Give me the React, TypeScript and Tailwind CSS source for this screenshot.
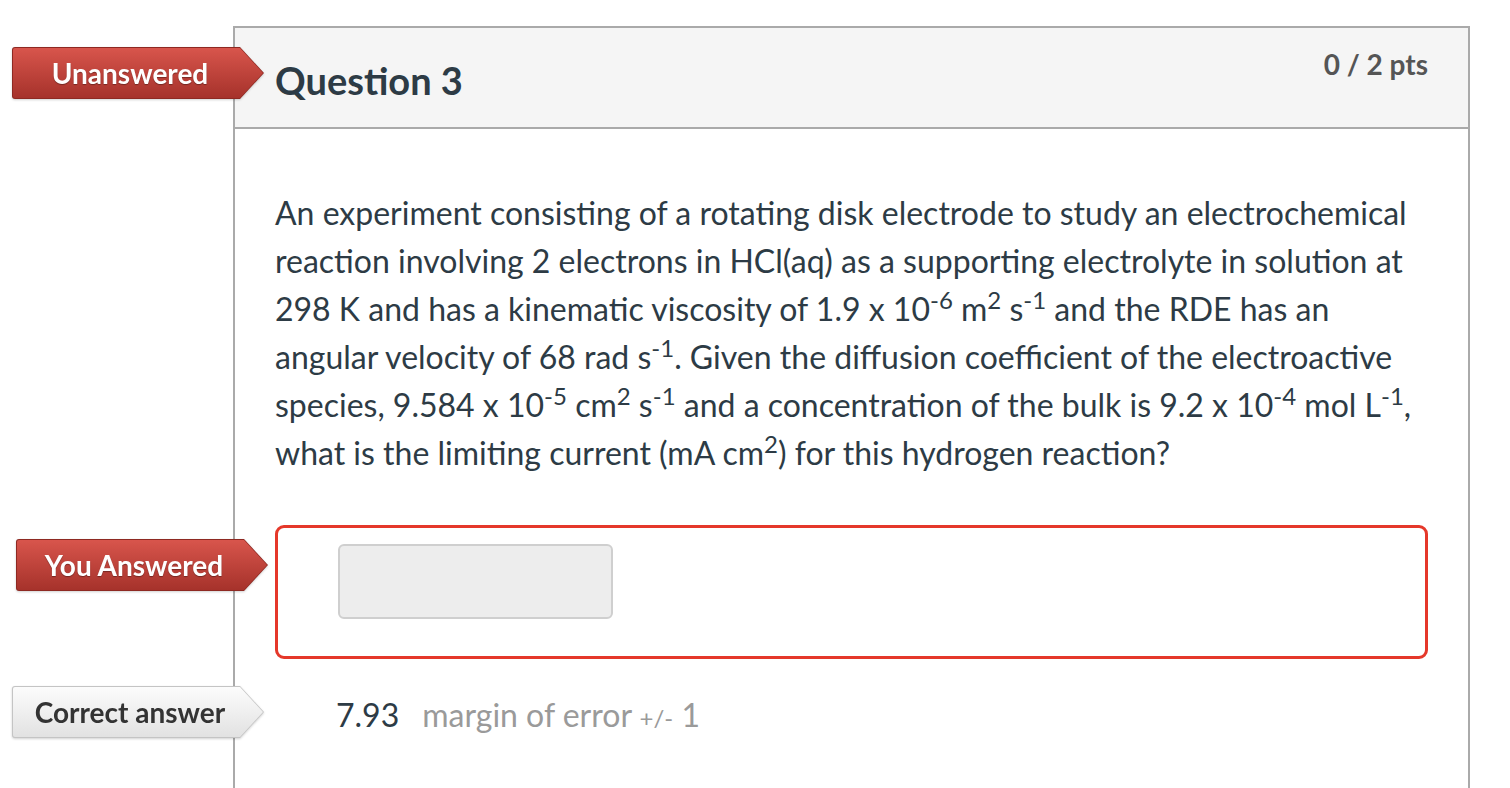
import React from "react";

type LabelProps = {
  text: string;
  tone: "red" | "gray";
  className?: string;
};

// arrow-shaped answer label hanging off the left of the card
const AnswerLabel = ({ text, tone, className }: LabelProps) => {
  const outer = tone === "red" ? "bg-[#8e2922]" : "bg-[#c4c4c4]";
  const inner =
    tone === "red"
      ? "bg-gradient-to-b from-[#d8554c] to-[#a6322b] text-white [text-shadow:0_1px_1px_rgba(0,0,0,0.35)]"
      : "bg-gradient-to-b from-[#fcfcfc] to-[#e2e2e2] text-[#333]";

  return (
    <div className={`absolute drop-shadow-[0_1px_1px_rgba(0,0,0,0.18)] ${className ?? ""}`}>
      <div
        className={`w-[252px] h-[52px] p-px rounded-l-[3px] ${outer} [clip-path:polygon(0_0,calc(100%_-_24px)_0,100%_50%,calc(100%_-_24px)_100%,0_100%)]`}
      >
        <div
          className={`h-full w-full rounded-l-[2px] flex items-center justify-center pr-[16px] text-[28px] leading-none font-bold ${inner} [clip-path:polygon(0_0,calc(100%_-_23px)_0,100%_50%,calc(100%_-_23px)_100%,0_100%)]`}
        >
          {text}
        </div>
      </div>
    </div>
  );
};

const App = () => {
  return (
    <div className="h-screen overflow-hidden bg-white font-['Lato',sans-serif] text-[#2d3b45]">
      <div className="pl-[233px] pr-[40px] pt-[26px]">
        <div className="relative border-2 border-b-0 border-[#aaaaaa] min-h-[900px]">
          <AnswerLabel text="Unanswered" tone="red" className="left-[-223px] top-[19px]" />

          <div className="h-[101px] bg-[#f5f5f5] border-b-2 border-[#aaaaaa] flex justify-between px-[40px]">
            <h2 className="pt-[30px] text-[38px] leading-[1.2] font-bold">Question 3</h2>
            <div className="pt-[20px] text-[28px] leading-[1.2] font-bold text-[#555]">0 / 2 pts</div>
          </div>

          <div className="px-[40px] pt-[60px]">
            <p className="text-[32px] leading-[48px]">
              An experiment consisting of a rotating disk electrode to study an electrochemical reaction
              involving 2 electrons in HCl(aq) as a supporting electrolyte in solution at 298 K and has a
              kinematic viscosity of 1.9 x 10<sup>-6</sup> m<sup>2</sup> s<sup>-1</sup> and the RDE has an
              angular velocity of 68 rad s<sup>-1</sup>. Given the diffusion coefficient of the
              electroactive species, 9.584 x 10<sup>-5</sup> cm<sup>2</sup> s<sup>-1</sup> and a
              concentration of the bulk is 9.2 x 10<sup>-4</sup> mol L<sup>-1</sup>, what is the limiting
              current (mA cm<sup>2</sup>) for this hydrogen reaction?
            </p>

            <div className="relative mt-[48px] h-[134px] border-[3px] border-[#e5382a] rounded-[9px] pl-[60px] pt-[16px]">
              <AnswerLabel text="You Answered" tone="red" className="left-[-262px] top-[11px]" />
              <div className="w-[275px] h-[75px] bg-[#ededed] border-2 border-[#cfcfcf] rounded-[6px]" />
            </div>

            <div className="relative mt-[32px] pl-[61px] flex items-baseline text-[32px] leading-[48px]">
              <AnswerLabel text="Correct answer" tone="gray" className="left-[-263px] top-[-5px]" />
              <span>7.93</span>
              <span className="ml-[23px] text-[#9a9a9a]">
                margin of error <span className="text-[24px]">+/-</span> 1
              </span>
            </div>
          </div>
        </div>
      </div>
    </div>
  );
};

export default App;
